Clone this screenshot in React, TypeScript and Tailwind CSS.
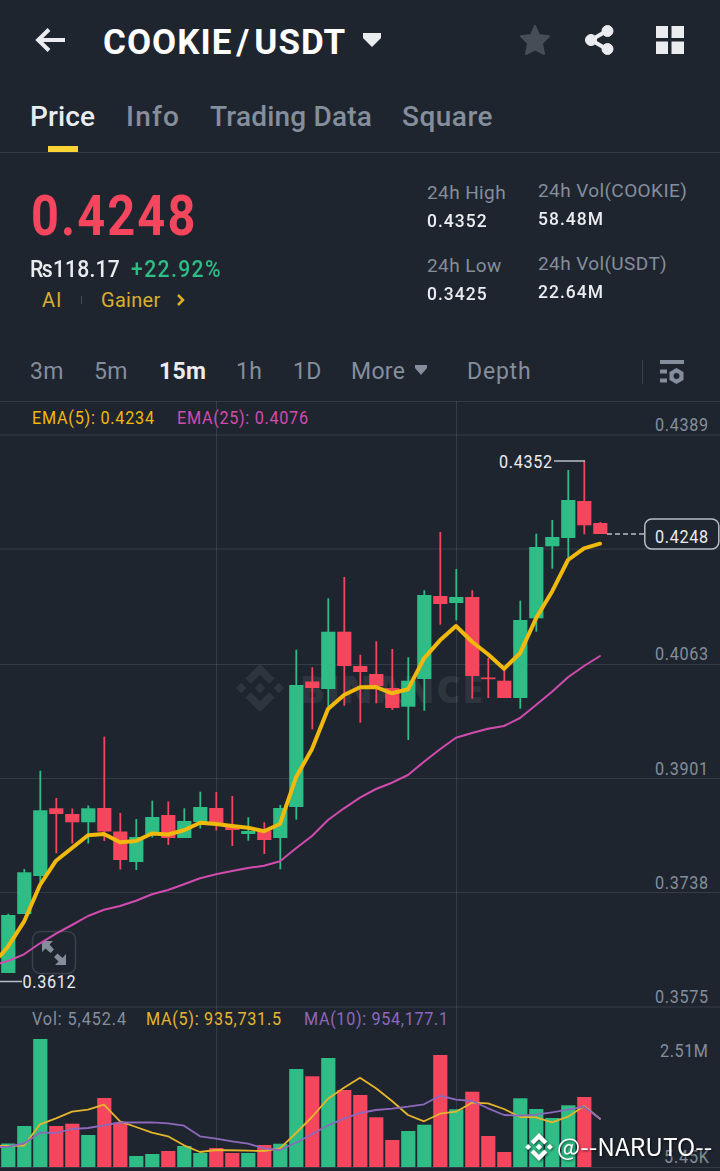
import React from "react";

type Candle = [high: number, top: number, bottom: number, low: number, up: 0 | 1, volumeTop: number];

const CHART_TOP = 401;
const GREEN = "#2ebd85";
const RED = "#f6465d";

const candles: Candle[] = [
  [913.7, 915, 973, 973, 1, 1143.5],
  [869, 872.3, 914, 914, 1, 1126],
  [770.7, 810.3, 876, 882, 1, 1039],
  [798, 808.3, 814, 853.3, 0, 1126],
  [808.5, 814, 822.3, 843.5, 0, 1123.7],
  [805.5, 808.3, 822.3, 843.5, 1, 1135],
  [736.7, 808, 831.5, 841, 0, 1098],
  [813, 831.5, 860, 869.5, 0, 1122.7],
  [819, 837, 862, 870, 1, 1156],
  [800.7, 817, 834, 837.5, 1, 1154],
  [801.5, 815, 838, 845, 0, 1151],
  [808.3, 821, 838, 838, 1, 1146],
  [791.7, 807, 822, 828.5, 1, 1153],
  [792, 808, 824, 830.5, 0, 1148],
  [796, 827, 830, 846, 0, 1153],
  [817.3, 831, 834, 840.7, 1, 1153],
  [822.3, 830.7, 840, 854, 0, 1145],
  [805, 808, 838, 869.3, 1, 1143.7],
  [649.7, 685, 807, 819.7, 1, 1069],
  [667.3, 681.5, 688, 729.3, 0, 1076.3],
  [598.3, 631.7, 689, 707, 1, 1058],
  [577, 631.7, 666, 705.7, 0, 1090],
  [654.7, 666, 672, 722.7, 0, 1095],
  [641.3, 674, 686, 703.3, 0, 1117.3],
  [649, 688, 708, 710, 0, 1140],
  [657.3, 680.7, 706.7, 740, 1, 1131],
  [590.3, 595, 679, 710.7, 1, 1124.7],
  [532, 596, 604, 624.7, 0, 1055],
  [569, 597, 603, 620.3, 1, 1109.3],
  [590.3, 597, 676, 698.7, 0, 1091.7],
  [658, 677.5, 679.2, 698, 0, 1136],
  [670, 680.7, 698, 698, 0, 1152],
  [600.7, 620, 698, 708.7, 1, 1098.3],
  [533.7, 547, 618.3, 631.7, 1, 1109],
  [520, 537, 546.3, 568.7, 1, 1118],
  [470, 500, 538, 558.3, 1, 1105.3],
  [460.7, 501, 525.3, 534.3, 0, 1097],
  [522, 523, 534, 534, 0, 1167],
];

const ema5 =
  "0,956 8,946.7 24,921.7 40,885 56,860.7 72,848 88,835.3 104,834 120,842.3 136,841 152,833.5 168,834.5 184,830.3 200,822.7 216,824 232,826 248,827.7 264,831.3 280,824 296,777.3 312,749 328,709 344,695 360,687.3 376,687 392,693.3 408,689.3 424,658.3 440,640.3 456,626 472,641.7 488,654.3 504,668.7 520,653.3 536,618.3 552,591.7 568,560 584,548.3 600,543.7";
const ema25 =
  "0,963.3 8,961 24,954.3 40,943.3 56,933.7 72,925 88,916 104,909.7 120,906 136,900.7 152,894.3 168,890 184,884.3 200,878.3 216,874.3 232,871 248,868 264,865.7 280,861.3 296,848.3 312,836 328,820 344,808.3 360,797.7 376,789 392,782.7 408,775 424,761.7 440,749.3 456,737.7 472,733 488,728.7 504,726 520,718 536,705 552,691.7 568,677.3 584,666 600,656";
const volMa5 =
  "0,1146 24,1145.7 40,1124.3 56,1118.3 72,1111.7 88,1109.7 104,1104.7 120,1121.3 136,1127 152,1132.7 168,1136.3 184,1145.3 200,1152 216,1150 248,1150.7 264,1151 280,1148.3 296,1133 312,1117 328,1098.7 344,1087.7 360,1077.7 376,1088.3 392,1101 408,1115 424,1121.3 440,1113.7 456,1111.7 472,1102.7 488,1103.3 504,1109 520,1117 536,1117.3 552,1122.3 568,1116.7 584,1106 600,1118.7";
const volMa10 =
  "0,1147 8,1146.7 24,1143.5 40,1132.7 56,1133 72,1129 88,1128 104,1125.3 120,1122.5 152,1122.3 168,1123.3 184,1125.7 200,1136.3 216,1138.7 232,1141.3 248,1143.7 264,1148.3 280,1150 296,1142.7 312,1134.3 328,1125.3 344,1118.7 360,1113 376,1110 392,1108.7 408,1106.7 424,1104.3 440,1095.7 456,1099.7 472,1101 488,1108.3 504,1115 520,1115.7 536,1114.7 552,1112.3 568,1109.7 584,1106.7 600,1118.7";

const axisLabels: [string, number][] = [
  ["0.4389", 431],
  ["0.4063", 660],
  ["0.3901", 775],
  ["0.3738", 889],
  ["0.3575", 1003],
];

const LABEL_CONDENSE = 0.9;

function Label({ x, y, width, fill, children }: { x: number; y: number; width: number; fill?: string; children: string }) {
  return (
    <text
      transform={`translate(${x} ${y}) scale(${LABEL_CONDENSE} 1)`}
      textLength={width / LABEL_CONDENSE}
      fill={fill}
    >
      {children}
    </text>
  );
}

function BinanceMark({ className }: { className: string }) {
  return (
    <svg viewBox="0 0 48 48" className={className} fill="currentColor">
      <path d="M24 0 38.5 14.5 33.2 19.8 24 10.6 14.8 19.8 9.5 14.5ZM5.3 18.7 10.6 24 5.3 29.3 0 24ZM42.7 18.7 48 24 42.7 29.3 37.4 24ZM24 18.5 29.5 24 24 29.5 18.5 24ZM14.8 28.2 24 37.4 33.2 28.2 38.5 33.5 24 48 9.5 33.5Z" />
    </svg>
  );
}

function Header() {
  return (
    <header className="flex h-[82px] items-center pl-[35px] pr-[36px]">
      <svg viewBox="0 0 30 24" className="mt-[-2px] h-6 w-[30px]" fill="none" stroke="#eaecef" strokeWidth="4">
        <path d="M3 12H30M14 1.5 3.2 12 14 22.5" />
      </svg>
      <h1 className="ml-[38px] mt-[2px] w-[260px] whitespace-nowrap text-[35px] font-bold leading-none tracking-[1px] text-white">
        COOKIE<span className="mx-[4px]">/</span>USDT
      </h1>
      <svg viewBox="0 0 18 14" className="mt-[-3px] h-[14px] w-[18px]" fill="#eaecef">
        <path d="M0 0H18V5L9 14 0 5Z" />
      </svg>
      <svg viewBox="0 0 30 30" className="ml-[139px] mt-[-2px] h-[30px] w-[30px]" fill="#474d57" stroke="#474d57" strokeWidth="2" strokeLinejoin="round">
        <path d="M15 1 19 10 29 11.2 22 18.3 24 29 15 24.3 6 29 8 18.3 1 11.2 11 10Z" />
      </svg>
      <svg viewBox="0 0 30 30" className="ml-[35px] mt-[-2px] h-[30px] w-[30px]" fill="#eaecef" stroke="#eaecef">
        <path d="M22.500 5.500 6 15 22.500 24.500" fill="none" strokeWidth="4" />
        <circle cx="22.500" cy="6" r="5.500" />
        <circle cx="6" cy="15" r="5.500" />
        <circle cx="22.500" cy="24" r="5.500" />
      </svg>
      <svg viewBox="0 0 28 28" className="ml-auto mt-[-2px] h-7 w-7" fill="#eaecef">
        <path d="M0 0H12V12H0ZM15.500 0H28V12H15.500ZM0 15.500H12V28H0ZM15.500 15.500H28V28H15.500Z" />
      </svg>
    </header>
  );
}

function Tabs() {
  return (
    <nav className="flex h-[71px] border-b border-[#333b47] pl-[30px] pt-[18px] text-[28px] font-medium leading-[34px] text-[#848e9c]">
      <div className="flex w-24 flex-col">
        <span className="whitespace-nowrap tracking-[0.1px] text-[#eaecef]">Price</span>
        <span className="ml-[18px] mt-[12px] h-[6px] w-[30px] bg-[#fcd535]" />
      </div>
      <span className="w-[84px] whitespace-nowrap tracking-[1.2px]">Info</span>
      <span className="w-[192px] whitespace-nowrap tracking-[0.2px]">Trading Data</span>
      <span className="whitespace-nowrap tracking-[0.5px]">Square</span>
    </nav>
  );
}

function Stat({ label, value }: { label: string; value: string }) {
  return (
    <div className="h-[72.500px] whitespace-nowrap">
      <div className="text-[19px] leading-6 tracking-[0.4px] text-[#848e9c]">{label}</div>
      <div className="mt-[4px] origin-left scale-x-[0.92] text-[19px] font-medium leading-6 tracking-[1.1px] text-[#eaecef]">{value}</div>
    </div>
  );
}

function Summary() {
  return (
    <section className="flex h-[190px] pl-[30px]">
      <div className="w-[397px] pt-[31px]">
        <div className="ml-px origin-left scale-x-[0.87] whitespace-nowrap text-[56px] font-bold leading-[64px] tracking-[2.4px] text-[#f6465d]">0.4248</div>
        <div className="mt-[9px] flex text-[23px] font-medium leading-[26px]">
          <span className="w-[101px] origin-left scale-x-[0.92] whitespace-nowrap tracking-[0.2px] text-[#eaecef]">₨118.17</span>
          <span className="origin-left scale-x-[0.92] whitespace-nowrap tracking-[1.5px] text-[#2ebd85]">+22.92%</span>
        </div>
        <div className="mt-[5px] flex items-center pl-3 text-[20px] leading-6 text-[#d9af2c]">
          <span className="w-[39px] tracking-[1px]">AI</span>
          <span className="mr-[19px] h-2 w-px bg-[#474d57]" />
          <span className="w-[76px] tracking-[0.3px]">Gainer</span>
          <svg viewBox="0 0 8 12" className="h-3 w-2" fill="none" stroke="#e0b020" strokeWidth="2.500">
            <path d="M1 1 6 6 1 11" />
          </svg>
        </div>
      </div>
      <div className="w-[111px] pt-7">
        <Stat label="24h High" value="0.4352" />
        <Stat label="24h Low" value="0.3425" />
      </div>
      <div className="pt-[26px]">
        <Stat label="24h Vol(COOKIE)" value="58.48M" />
        <Stat label="24h Vol(USDT)" value="22.64M" />
      </div>
    </section>
  );
}

function Intervals() {
  return (
    <div className="flex h-[58px] items-center pl-[30px] pt-px text-[23px] tracking-[0.3px] text-[#848e9c]">
      <span className="w-16">3m</span>
      <span className="w-[65px]">5m</span>
      <span className="w-[77px] font-bold text-[#eaecef]">15m</span>
      <span className="w-[57px]">1h</span>
      <span className="w-[58px]">1D</span>
      <span className="w-[64px]">More</span>
      <svg viewBox="0 0 12 10" className="mt-[-5px] h-[10px] w-3" fill="#848e9c">
        <path d="M0 0H12V3L6 10 0 3Z" />
      </svg>
      <span className="ml-[40px] w-[175px] tracking-[0.800px]">Depth</span>
      <span className="mt-[-2px] h-6 w-px bg-[#3b434e]" />
      <svg viewBox="0 0 24 24" className="ml-[17px] mt-[-2px] h-6 w-6" fill="#848e9c">
        <path d="M0 0H24V4H0ZM0 9.500H7V13.500H0ZM0 18.500H7V22.500H0Z" />
        <path fillRule="evenodd" d="M16.500 8 23.500 12V20L16.500 24 9.500 20V12ZM16.500 13A3 3 0 1 0 16.500 19 3 3 0 1 0 16.500 13Z" />
      </svg>
    </div>
  );
}

function Chart() {
  return (
    <section className="relative h-[770px]">
      <div className="absolute left-[236px] top-[263px] flex items-center gap-4 text-[#2f353f]">
        <BinanceMark className="h-12 w-12" />
        <span className="font-['Open_Sans',sans-serif] text-[37px] font-extrabold leading-none tracking-[2px]">BINANCE</span>
      </div>
      <svg viewBox={`0 ${CHART_TOP} 720 770`} className="absolute left-0 top-0 h-[770px] w-[720px]">
        <g stroke="#ffffff" strokeOpacity="0.1">
          {[401.5, 435, 549, 664.5, 778.5, 892.5, 1007, 1167.5].map((y) => (
            <path key={y} d={`M0 ${y}H720`} />
          ))}
          <path d="M216.500 401V1167M456.500 401V1167" />
        </g>
        {candles.map(([high, top, bottom, low, up, volumeTop], i) => {
          const x = 8.3 + i * 16;
          const color = up ? GREEN : RED;
          return (
            <g key={i} fill={color}>
              <rect x={x - 0.9} y={high} width="1.8" height={low - high} />
              <rect x={x - 7.1} y={top} width="14.2" height={bottom - top} />
              <rect x={x - 7.1} y={volumeTop} width="14.2" height={1167 - volumeTop} />
            </g>
          );
        })}
        <rect x="32.500" y="931.500" width="43" height="42" rx="8" fill="none" stroke="#39414c" strokeWidth="1.500" />
        <g fill="#848e9c">
          <path d="M42 941H53L49.500 944.500 54 949.500 50.500 953 45.500 948.500 42 952Z" />
          <path d="M66 965H55L58.500 961.500 54 957 57.500 953.500 62.500 958 66 954Z" />
        </g>
        <g fill="none" strokeLinejoin="round" strokeLinecap="round">
          <polyline points={ema25} stroke="#d14cae" strokeWidth="2" />
          <polyline points={ema5} stroke="#f0b90b" strokeWidth="4" />
          <polyline points={volMa5} stroke="#e5b52b" strokeWidth="1.800" />
          <polyline points={volMa10} stroke="#8d68bd" strokeWidth="1.800" />
        </g>
        <g stroke="#b7bdc6" fill="none" strokeWidth="1.500">
          <path d="M0 981.500H22M554 461H585" />
          <path d="M607 534H644" strokeDasharray="5 3" />
          <rect x="644.800" y="519" width="74" height="30" rx="7" fill="#1f252f" />
        </g>
        <g className="font-['Roboto']" fontSize="18">
          <g fill="#848e9c">
            {axisLabels.map(([text, y]) => (
              <Label key={text} x={655} y={y} width={53}>{text}</Label>
            ))}
            <Label x={660} y={1057} width={48}>2.51M</Label>
            <Label x={664} y={1163} width={45}>5.45K</Label>
            <Label x={32} y={1025} width={94}>Vol: 5,452.4</Label>
          </g>
          <g fill="#eaecef">
            <Label x={499} y={468} width={53}>0.4352</Label>
            <Label x={22.5} y={988} width={53}>0.3612</Label>
            <Label x={655} y={543} width={53}>0.4248</Label>
          </g>
          <Label x={32} y={424} width={122} fill="#f0b90b">EMA(5): 0.4234</Label>
          <Label x={177} y={424} width={131} fill="#d14cae">EMA(25): 0.4076</Label>
          <Label x={146} y={1025} width={135} fill="#e5b52b">MA(5): 935,731.5</Label>
          <Label x={304} y={1025} width={144} fill="#8d68bd">MA(10): 954,177.1</Label>
        </g>
      </svg>
      <div className="absolute left-[525px] top-[732px] flex items-center gap-[4px] whitespace-nowrap text-white drop-shadow-[1px_1px_1px_rgba(0,0,0,0.600)]">
        <BinanceMark className="h-7 w-7" />
        <span className="mt-[-2px] font-['Noto_Sans_CJK_SC',sans-serif] text-[24.500px] leading-7">@--NARUTO--</span>
      </div>
    </section>
  );
}

export default function App() {
  return (
    <main className="h-[1171px] w-[720px] overflow-hidden bg-[#1f252f] font-['Roboto',sans-serif]">
      <Header />
      <Tabs />
      <Summary />
      <Intervals />
      <Chart />
    </main>
  );
}
